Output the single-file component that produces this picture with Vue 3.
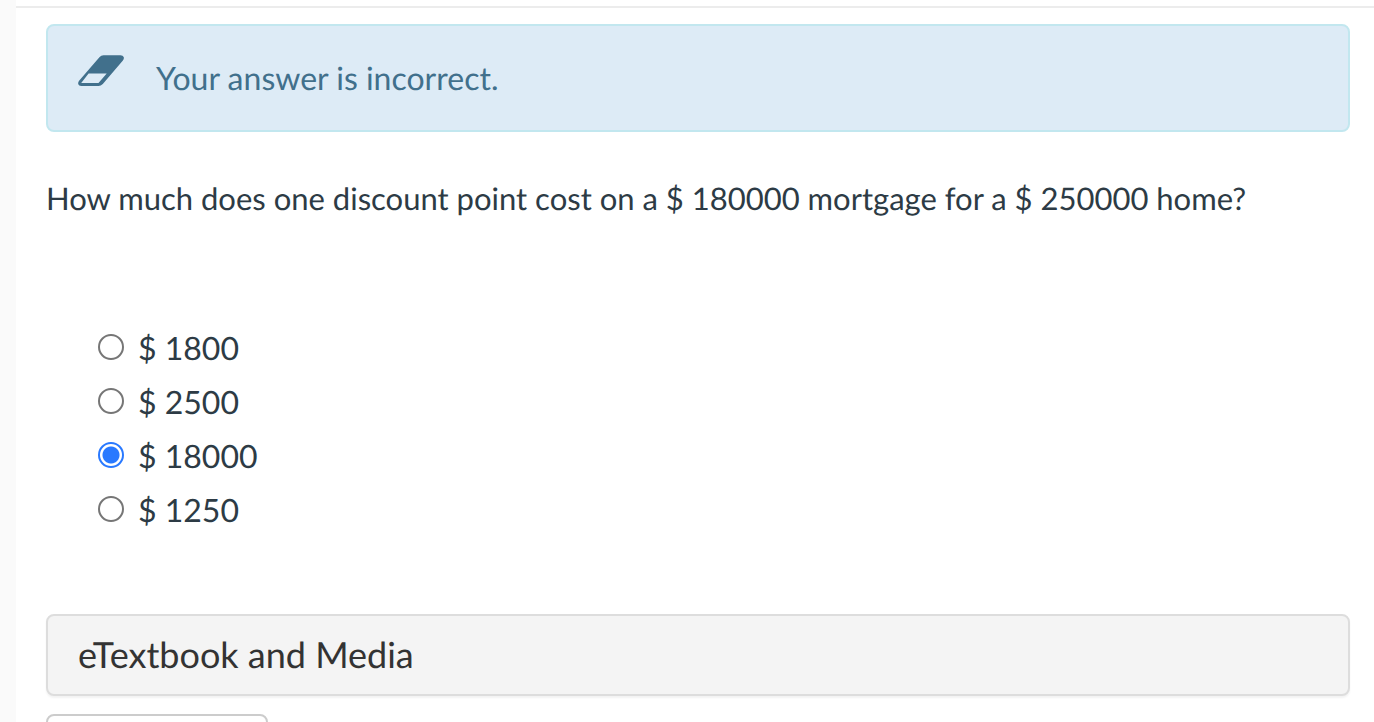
<script setup>
import { ref } from 'vue'

const selected = ref('18000')
const options = ['1800', '2500', '18000', '1250']
</script>

<template>
  <main class="page">
    <div class="alert" role="status">
      <svg class="eraser" viewBox="0 0 48 32" aria-hidden="true">
        <path
          fill-rule="evenodd"
          d="M25.5 .2H42.500Q45 .2 45.700 2 46.300 3.800 44.900 5.500L24.800 29Q22.800 31 20.500 31H3.200Q.9 31 .3 29.200-.2 27.500 1.100 25.700L21.400 2.200Q23.200 .2 25.500 .2ZM10.600 18.400 3.200 27.900H20.500L28.700 18.400Z"
        />
      </svg>
      <p class="alert-text">Your answer is incorrect.</p>
    </div>

    <form class="question" @submit.prevent>
      <fieldset class="fields">
        <legend class="prompt">
          How much does one discount point cost on a $ 180000 mortgage for a $ 250000 home?
        </legend>
        <div class="options">
          <label v-for="option in options" :key="option" class="option">
            <input v-model="selected" class="radio" type="radio" name="answer" :value="option" />
            <span>$ {{ option }}</span>
          </label>
        </div>
      </fieldset>
    </form>

    <button class="media" type="button">eTextbook and Media</button>
    <button class="action" type="button" aria-label="Continue"></button>
  </main>
</template>

<style>
body {
  background: #fafafa;
}
</style>

<style scoped>
.page {
  box-sizing: border-box;
  height: 100vh;
  margin-left: 16px;
  padding: 6px 24px 0 30px;
  overflow: hidden;
  background: linear-gradient(#ececec, #ececec) 0 6px / 100% 2px no-repeat #fff;
  color: #2d3b45;
  font: 32px/48px Lato, sans-serif;
  text-rendering: geometricPrecision;
}

.alert {
  display: flex;
  align-items: flex-start;
  gap: 30px;
  margin-top: 18px;
  padding: 28px 30px;
  border: 2px solid #c2e7ef;
  border-radius: 8px;
  background: #ddebf6;
  color: #41708c;
}

.eraser {
  flex: none;
  width: 48px;
  height: 32px;
  margin-top: 1px;
  fill: currentColor;
}

.alert-text {
  margin: 0;
}

.question {
  margin-top: 42px;
}

.fields {
  min-width: 0;
  margin: 0;
  padding: 0;
  border: 0;
}

.prompt {
  padding: 0;
  font-size: 31px;
}

.options {
  display: flex;
  flex-direction: column;
  align-items: flex-start;
  padding: 99px 0 0 52px;
}

.option {
  display: flex;
  align-items: center;
  gap: 14px;
  height: 54px;
}

.radio {
  appearance: none;
  box-sizing: border-box;
  width: 26px;
  height: 26px;
  margin: 0 0 2px;
  border: 2px solid #767676;
  border-radius: 50%;
  background: #fff;
}

.radio:checked {
  border-color: #2979ff;
  background: radial-gradient(circle, #2979ff 8px, #fff 9px);
}

.media {
  display: block;
  width: 100%;
  margin-top: 77px;
  padding: 14px 30px 16px;
  border: 2px solid #ddd;
  border-radius: 8px;
  background: #f4f4f4;
  box-shadow: 0 2px 2px rgba(0, 0, 0, 0.05);
  color: #333;
  font: 36px/48px Lato, sans-serif;
  text-rendering: inherit;
  text-align: left;
}

.action {
  display: block;
  width: 222px;
  height: 68px;
  margin-top: 18px;
  border: 2px solid #ccc;
  border-radius: 8px;
  background: #fff;
}
</style>
